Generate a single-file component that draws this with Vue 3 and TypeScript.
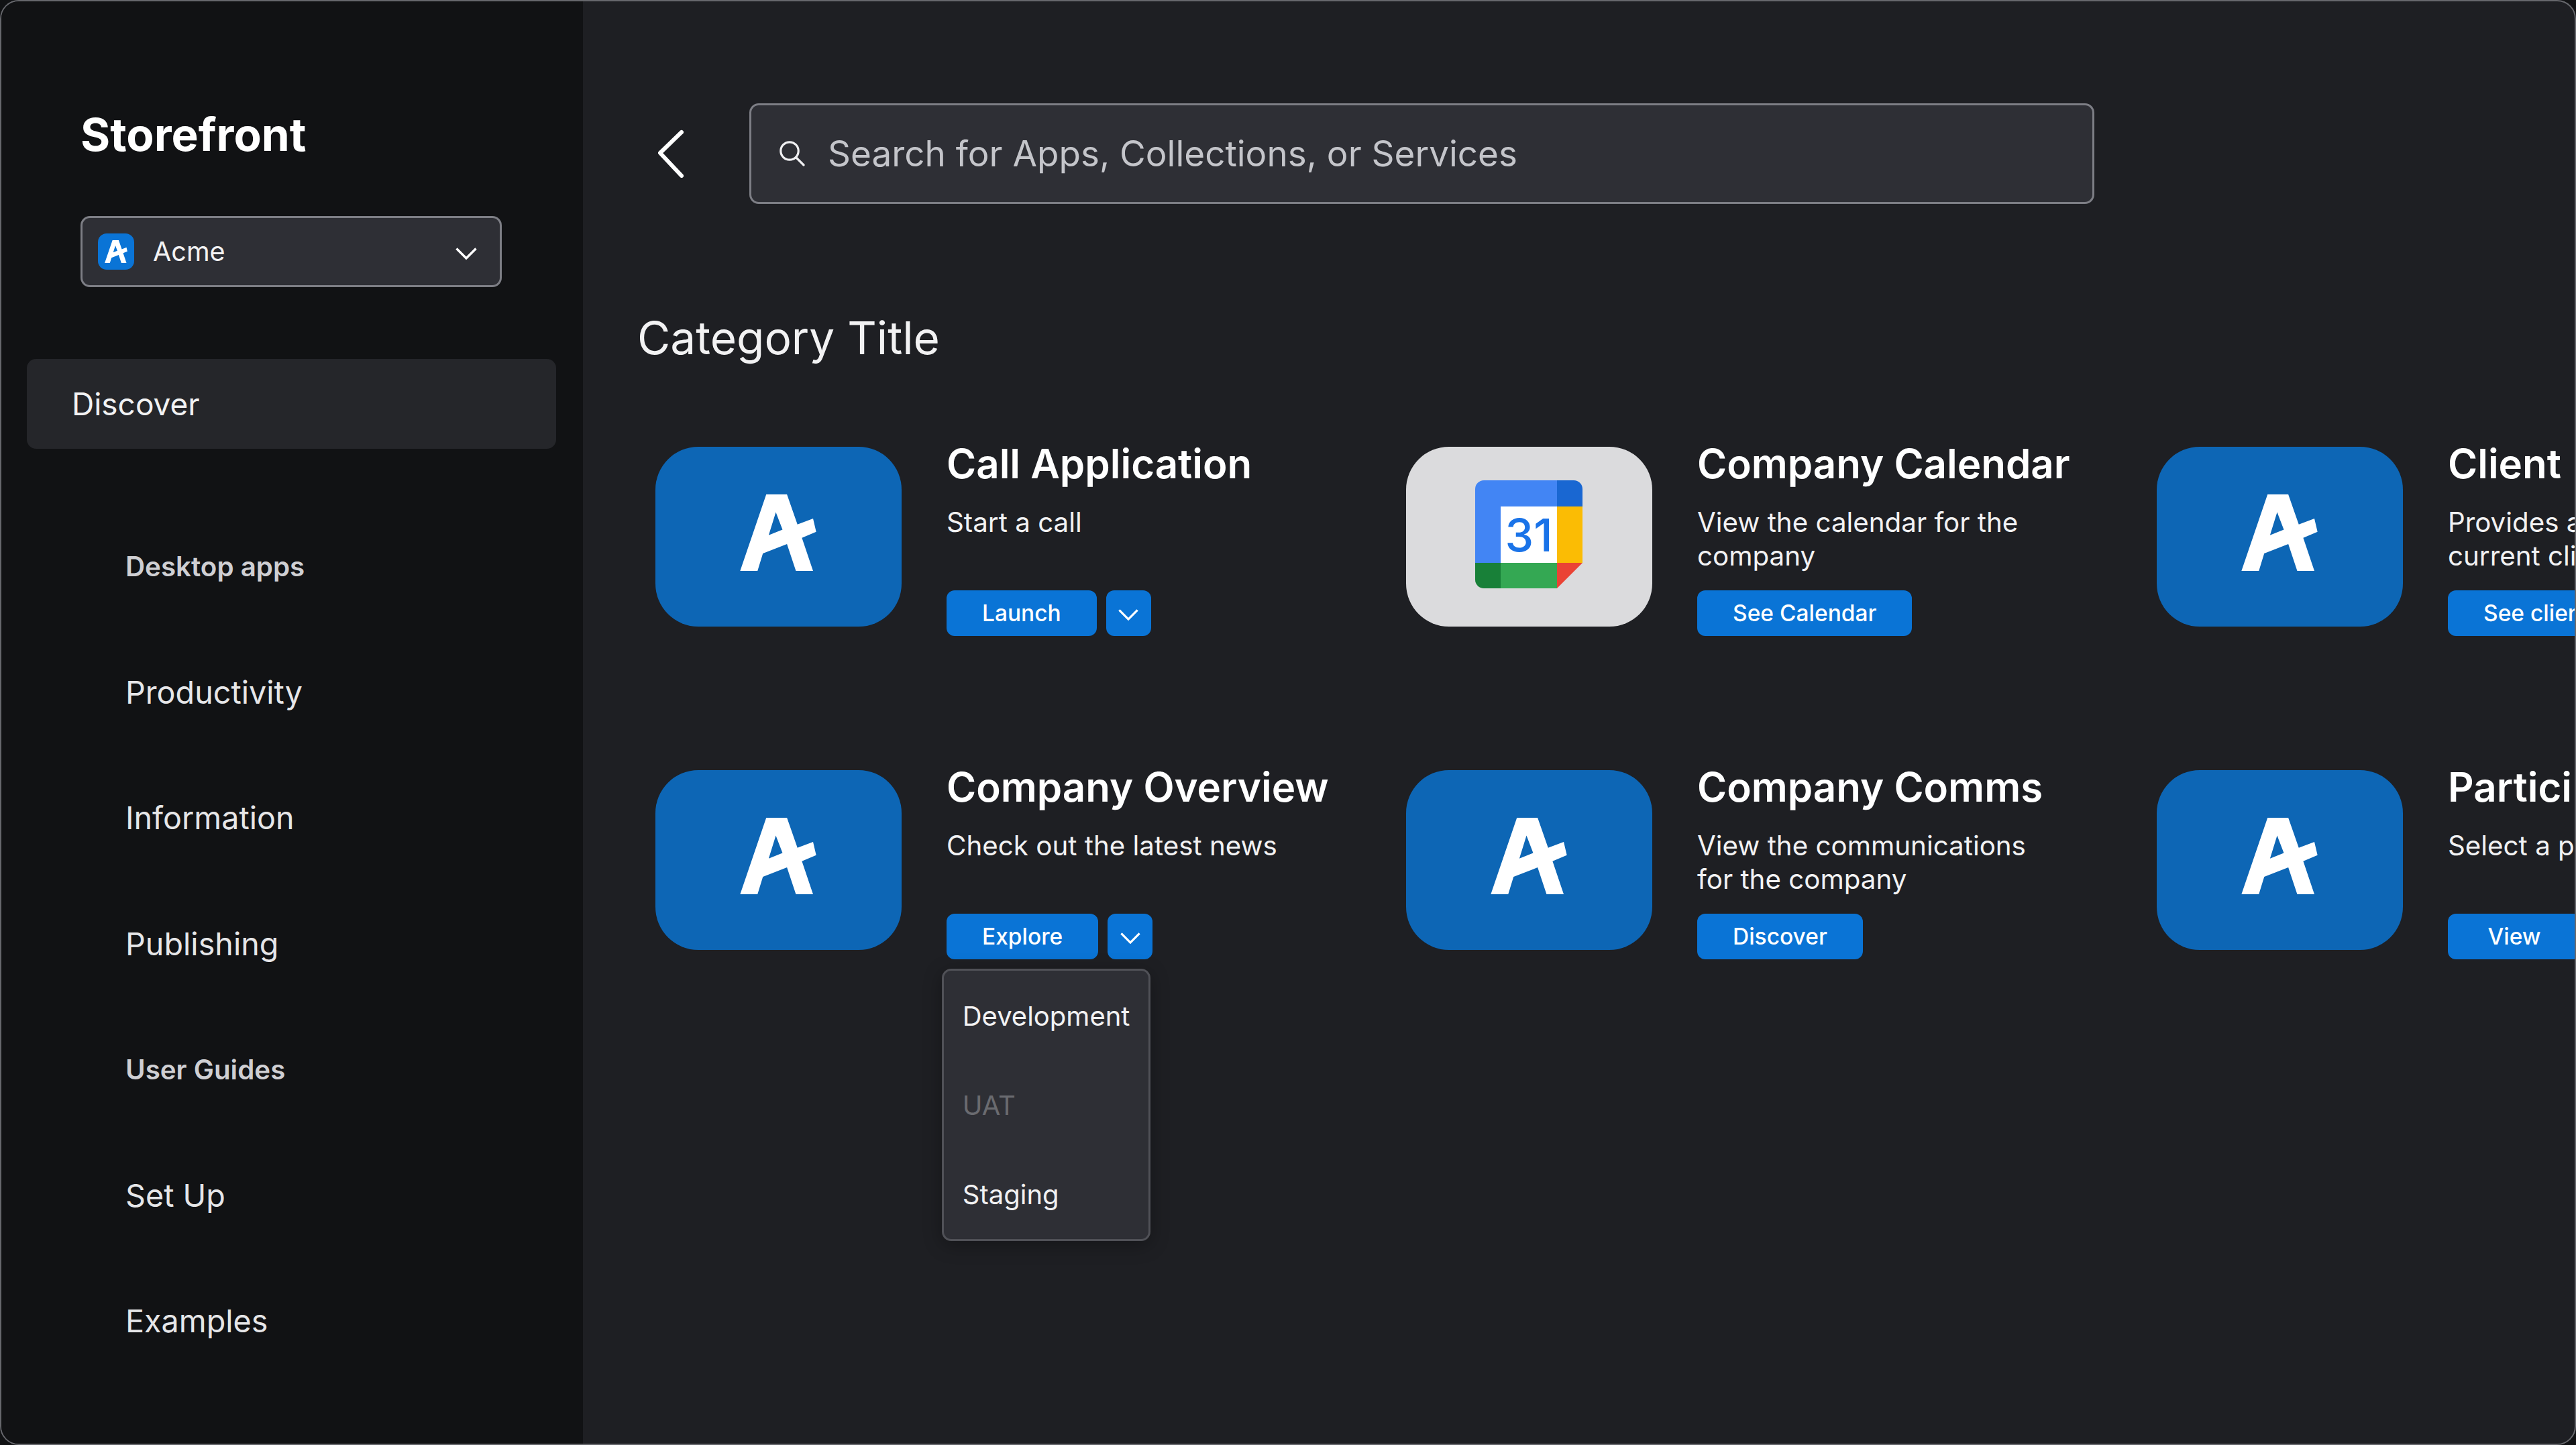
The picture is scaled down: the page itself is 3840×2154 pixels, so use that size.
<script setup lang="ts">
interface Card {
  title: string
  desc: string
  action: string
  light?: boolean
  split?: boolean
  menu?: boolean
}

const nav = [
  { label: 'Desktop apps', head: true },
  { label: 'Productivity', head: false },
  { label: 'Information', head: false },
  { label: 'Publishing', head: false },
  { label: 'User Guides', head: true },
  { label: 'Set Up', head: false },
  { label: 'Examples', head: false },
]

const cards: Card[] = [
  { title: 'Call Application', desc: 'Start a call', action: 'Launch', split: true },
  { title: 'Company Calendar', desc: 'View the calendar for the company', action: 'See Calendar', light: true },
  { title: 'Client', desc: 'Provides a summary of the current client list', action: 'See client list' },
  { title: 'Company Overview', desc: 'Check out the latest news', action: 'Explore', split: true, menu: true },
  { title: 'Company Comms', desc: 'View the communications for the company', action: 'Discover' },
  { title: 'Partici', desc: 'Select a participant', action: 'View' },
]

const logo = 'M427 77H520L567 212L637 185L651 245L587 272L637 420H560L520 300L412 342L388 420H310ZM470 157L438 260L500 235Z'
</script>

<template>
  <div class="window">
    <aside class="sidebar">
      <h1 class="brand">Storefront</h1>
      <div class="select">
        <span class="select-logo">
          <svg viewBox="310 77 341 343" class="logo-sm"><path :d="logo" fill="#fff" fill-rule="evenodd" /></svg>
        </span>
        <span class="select-label">Acme</span>
        <svg class="select-chevron" viewBox="0 0 32 18"><path d="M1.5 1.5 16 16 30.5 1.5" /></svg>
      </div>
      <div class="discover">Discover</div>
      <nav class="nav">
        <a v-for="item in nav" :key="item.label" class="nav-item" :class="{ head: item.head }">{{ item.label }}</a>
      </nav>
    </aside>
    <main class="main">
      <div class="topbar">
        <svg class="back" viewBox="0 0 38 72"><path d="M35 4 3 35 35 69" /></svg>
        <div class="search">
          <svg class="search-icon" viewBox="0 0 38 38"><circle cx="15" cy="15" r="13.2" /><path d="M24.5 24.5 36 36" /></svg>
          <span>Search for Apps, Collections, or Services</span>
        </div>
      </div>
      <h2 class="category">Category Title</h2>
      <section class="grid">
        <article v-for="card in cards" :key="card.title" class="card">
          <div class="tile" :class="{ light: card.light }">
            <svg v-if="card.light" class="gcal" viewBox="0 0 160 161">
              <path d="M122 0H13A13 13 0 0 0 0 13V123H38V39H122Z" fill="#4285F4" />
              <path d="M122 0H147A13 13 0 0 1 160 13V39H122Z" fill="#1967D2" />
              <rect x="38" y="39" width="84" height="84" fill="#fff" />
              <rect x="122" y="39" width="38" height="84" fill="#FBBC04" />
              <path d="M122 123H160L122 161Z" fill="#EA4335" />
              <rect x="38" y="123" width="84" height="38" fill="#34A853" />
              <path d="M0 123H38V161H13A13 13 0 0 1 0 148Z" fill="#188038" />
              <text x="80" y="106" text-anchor="middle" class="gcal-num">31</text>
            </svg>
            <svg v-else class="logo" viewBox="310 77 341 343"><path :d="logo" fill="#fff" fill-rule="evenodd" /></svg>
          </div>
          <div class="body">
            <h3 class="title">{{ card.title }}</h3>
            <p class="desc">{{ card.desc }}</p>
            <div class="actions">
              <button class="btn">{{ card.action }}</button>
              <div v-if="card.split" class="split-wrap">
                <button class="btn-chevron">
                  <svg viewBox="0 0 32 18"><path d="M1.5 1.5 16 16 30.5 1.5" /></svg>
                </button>
                <ul v-if="card.menu" class="menu">
                  <li>Development</li>
                  <li class="disabled">UAT</li>
                  <li>Staging</li>
                </ul>
              </div>
            </div>
          </div>
        </article>
      </section>
    </main>
  </div>
</template>

<style scoped>
.window {
  width: 3840px;
  height: 2154px;
  display: flex;
  overflow: hidden;
  background: #1e1f23;
  border-radius: 28px;
  box-sizing: border-box;
  border: 2px solid #66676c;
  font-family: Inter, "Liberation Sans", sans-serif;
  color: #fff;
}
.sidebar {
  width: 867px;
  flex: none;
  height: 100%;
  background: #111214;
  box-sizing: border-box;
  padding: 0 40px 0 38px;
  display: flex;
  flex-direction: column;
}
.brand {
  margin: 158px 0 0 80px;
  font-size: 67.5px;
  line-height: 82px;
  font-weight: 700;
}
.select {
  margin: 80px 81px 0 80px;
  height: 106px;
  box-sizing: border-box;
  border: 3px solid #7d7e85;
  border-radius: 14px;
  background: #2e2f35;
  display: flex;
  align-items: center;
  padding: 0 34px 0 23px;
}
.select-logo {
  width: 54px;
  height: 54px;
  border-radius: 13px;
  background: #0a74d6;
  display: flex;
  align-items: center;
  justify-content: center;
}
.logo-sm { width: 34px; height: 34px; }
.select-label {
  margin-left: 28px;
  font-size: 39.6px;
  flex: 1;
  color: #f2f2f3;
}
.select-chevron { width: 32px; height: 18px; margin-top: 5px; }
.select-chevron path, .btn-chevron path {
  fill: none;
  stroke: #fff;
  stroke-width: 3.4;
}
.discover {
  margin-top: 107px;
  height: 134px;
  border-radius: 14px;
  background: #25262a;
  display: flex;
  align-items: center;
  padding-left: 67px;
  font-size: 46px;
  color: #f2f2f3;
}
.nav {
  display: flex;
  flex-direction: column;
  margin-top: 82px;
}
.nav-item {
  height: 187.4px;
  display: flex;
  align-items: center;
  padding-left: 147px;
  font-size: 46.7px;
  color: #e6e6e8;
}
.nav-item.head {
  font-size: 40.3px;
  font-weight: 600;
  color: #cfcfd3;
}
.main {
  flex: 1;
  min-width: 0;
  display: flex;
  flex-direction: column;
  padding-left: 81px;
}
.topbar {
  display: flex;
  align-items: center;
  margin-top: 152px;
}
.back {
  width: 38px;
  height: 72px;
  margin-left: 31px;
}
.back path {
  fill: none;
  stroke: #fff;
  stroke-width: 6;
  stroke-linecap: round;
  stroke-linejoin: round;
}
.search {
  margin-left: 98px;
  width: 2005px;
  height: 150px;
  box-sizing: border-box;
  border: 3px solid #7d7e85;
  border-radius: 14px;
  background: #2e2f35;
  display: flex;
  align-items: center;
  padding-left: 42px;
  font-size: 53px;
  color: #c4c5ca;
}
.search-icon {
  width: 38px;
  height: 38px;
  margin-right: 34px;
}
.search-icon circle, .search-icon path {
  fill: none;
  stroke: #f0f0f2;
  stroke-width: 3.2;
  stroke-linecap: round;
}
.category {
  margin: 156px 0 0 0;
  font-size: 67.5px;
  line-height: 88px;
  font-weight: 400;
  color: #f2f2f3;
}
.grid {
  margin-top: 118px;
  margin-left: 26.5px;
  display: grid;
  grid-template-columns: repeat(3, 1119px);
  grid-auto-rows: 482px;
}
.card {
  display: flex;
  gap: 67.5px;
  align-items: flex-start;
}
.tile {
  width: 367px;
  height: 268px;
  flex: none;
  border-radius: 64px;
  background: #0d66b5;
  display: flex;
  align-items: center;
  justify-content: center;
}
.tile.light { background: #dbdbdd; }
.logo { width: 114px; height: 114px; margin-bottom: 12px; }
.gcal { width: 160px; height: 161px; margin-bottom: 8px; }
.gcal-num {
  font-family: Inter, "Liberation Sans", sans-serif;
  font-size: 68px;
  font-weight: 500;
  fill: #1a73e8;
}
.body {
  width: 660px;
  flex: none;
  height: 282px;
  display: flex;
  flex-direction: column;
}
.title {
  margin: 0;
  font-size: 60px;
  line-height: 50px;
  font-weight: 600;
}
.desc {
  margin: 38px 0 0 0;
  font-size: 40.3px;
  line-height: 50px;
  color: #f2f2f3;
  max-width: 510px;
}
.actions {
  display: flex;
  gap: 14px;
  margin-top: auto;
}
.btn {
  height: 68px;
  min-width: 198px;
  box-sizing: border-box;
  padding: 0 53px;
  border: 0;
  border-radius: 12px;
  background: #0a74d6;
  color: #fff;
  white-space: nowrap;
  font: 500 33.5px Inter, "Liberation Sans", sans-serif;
}
.split-wrap { position: relative; }
.btn-chevron {
  width: 67px;
  height: 68px;
  padding: 0;
  border: 0;
  border-radius: 12px;
  background: #0a74d6;
  display: flex;
  align-items: center;
  justify-content: center;
}
.btn-chevron svg { width: 30px; height: 17px; margin-top: 5px; }
.menu {
  position: absolute;
  top: 82px;
  right: 3px;
  width: 311px;
  height: 406px;
  box-sizing: border-box;
  margin: 0;
  padding: 1px 0 0 0;
  list-style: none;
  border: 3px solid #505157;
  border-radius: 14px;
  background: #2e2f35;
  box-shadow: 0 6px 28px rgba(0, 0, 0, 0.3);
  font-size: 40px;
  z-index: 2;
}
.menu li {
  height: 133px;
  display: flex;
  align-items: center;
  padding-left: 27.5px;
  color: #f2f2f3;
}
.menu li.disabled { color: #6a6b70; }
</style>

<style>
html, body { background: #111214; }
</style>
